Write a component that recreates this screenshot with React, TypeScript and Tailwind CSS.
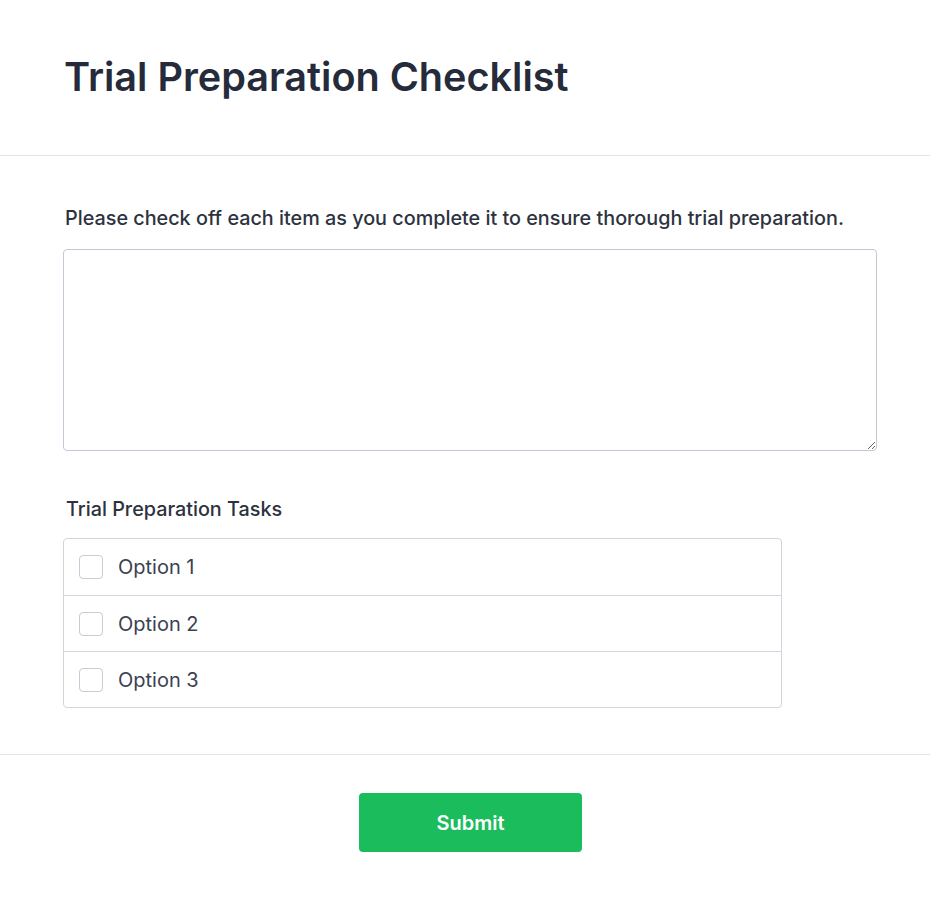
import React from "react";

export default function App() {
  const options = ["Option 1", "Option 2", "Option 3"];
  return (
    <div className="min-h-[901px] w-full bg-white" style={{ fontFamily: "Inter, 'Noto Sans', sans-serif" }}>
      <div className="border-b border-[#e3e4ea] px-16 pt-[49px] pb-[50px]">
        <h1 className="text-[39.6px] font-semibold leading-[56px] text-[#262b3b]">Trial Preparation Checklist</h1>
      </div>
      <div className="px-[63px] pt-[49px]">
        <p className="pl-[2px] text-[19.8px] font-medium leading-[26px] text-[#2d3240]">
          Please check off each item as you complete it to ensure thorough trial preparation.
        </p>
        <textarea className="mt-[18px] block h-[202px] w-[814px] rounded-[4px] border border-[#c5c8d4] bg-white p-3 outline-none" />
        <p className="mt-[45px] pl-[3px] text-[19.8px] font-medium leading-[26px] text-[#2d3240]">Trial Preparation Tasks</p>
        <div className="mt-[16px] w-[719px] rounded-[4px] border border-[#d3d5dd]">
          {options.map((o, i) => (
            <label
              key={o}
              className={`flex h-[56px] items-center gap-[15px] pl-[15px] ${i > 0 ? "border-t border-[#d3d5dd]" : ""}`}
            >
              <span className="block h-[24px] w-[24px] rounded-[4px] border border-[#c9cbd6] bg-white" />
              <span className="text-[20px] leading-[24px] text-[#3c4150]">{o}</span>
            </label>
          ))}
        </div>
      </div>
      <div className="mt-[46px] flex justify-center border-t border-[#e3e4ea] pl-[11px] pt-[38px]">
        <button className="h-[59px] w-[223px] rounded-[4px] bg-[#1abc5c] text-[20px] font-semibold text-white">
          Submit
        </button>
      </div>
    </div>
  );
}
